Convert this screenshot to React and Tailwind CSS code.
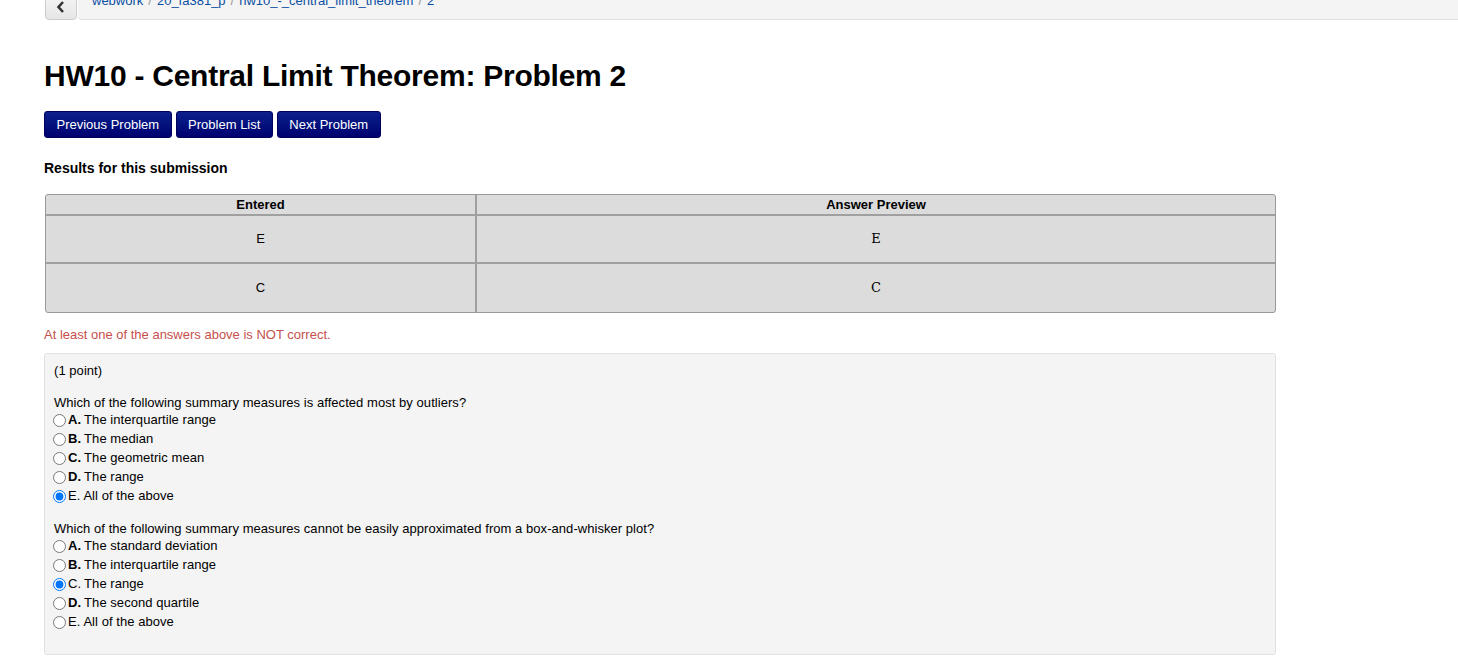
import React from 'react';

const questions = [
  {
    text: 'Which of the following summary measures is affected most by outliers?',
    options: [
      { letter: 'A.', label: 'The interquartile range' },
      { letter: 'B.', label: 'The median' },
      { letter: 'C.', label: 'The geometric mean' },
      { letter: 'D.', label: 'The range' },
      { letter: 'E.', label: 'All of the above', checked: true, plain: true },
    ],
  },
  {
    text: 'Which of the following summary measures cannot be easily approximated from a box-and-whisker plot?',
    options: [
      { letter: 'A.', label: 'The standard deviation' },
      { letter: 'B.', label: 'The interquartile range' },
      { letter: 'C.', label: 'The range', checked: true, plain: true },
      { letter: 'D.', label: 'The second quartile' },
      { letter: 'E.', label: 'All of the above', plain: true },
    ],
  },
];

const answers = ['E', 'C'];

export default function App() {
  return (
    <div className="min-h-screen bg-white text-black font-['Liberation_Sans',Arial,sans-serif]">
      {/* Breadcrumb (scrolled partly off the top) */}
      <div className="flex -mt-[22px] pl-[45px]">
        <button className="w-[32px] h-[42px] border border-[#ccc] rounded-b-[4px] bg-gradient-to-b from-white to-[#e6e6e6] flex items-end justify-center pb-[6px] text-[#333]">
          <svg width="10" height="12" viewBox="0 0 10 12">
            <path d="M7 1 L2.5 6 L7 11" stroke="#333" strokeWidth="2.6" fill="none" />
          </svg>
        </button>
        <div className="flex-1 h-[42px] ml-[1px] bg-[#f4f4f4] border-b border-[#e0e0e0] rounded-bl-[4px] flex items-end pl-[14px] pb-[12px] text-[13px] leading-none text-[#0b4fa3]">
          webwork <span className="mx-[5px] text-[#999]">/</span> 20_fa381_p <span className="mx-[5px] text-[#999]">/</span> hw10_-_central_limit_theorem <span className="mx-[5px] text-[#999]">/</span> 2
        </div>
      </div>

      <div className="pl-[44px] w-[1276px]">
        <h1 className="mt-[38px] text-[30px] font-bold leading-[36px] tracking-[-0.25px]">
          HW10 - Central Limit Theorem: Problem 2
        </h1>

        <div className="mt-[17px] flex gap-[4px]">
          {['Previous Problem', 'Problem List', 'Next Problem'].map((b) => (
            <button
              key={b}
              className="h-[27px] px-[11.5px] rounded-[3px] border border-[#00005a] bg-gradient-to-b from-[#0d1f8c] to-[#000070] text-white text-[13px] leading-none"
            >
              {b}
            </button>
          ))}
        </div>

        <h2 className="mt-[22px] text-[14px] font-bold leading-[16px]">Results for this submission</h2>

        {/* Results table */}
        <div className="mt-[18px] ml-[1px] border border-[#999] rounded-[3px] bg-[#dcdcdc] overflow-hidden text-[13px]">
          <div className="grid grid-cols-[431px_1fr] h-[21px] border-b-2 border-[#a0a0a0]">
            <div className="border-r-2 border-[#a0a0a0] flex items-center justify-center font-bold">Entered</div>
            <div className="flex items-center justify-center font-bold">Answer Preview</div>
          </div>
          {answers.map((a, i) => (
            <div
              key={i}
              className={`grid grid-cols-[431px_1fr] h-[48px] ${i === 0 ? 'border-b-2 border-[#a0a0a0]' : ''}`}
            >
              <div className="border-r-2 border-[#a0a0a0] flex items-center justify-center">{a}</div>
              <div className="flex items-center justify-center font-['DejaVu_Serif',serif] text-[13px]">
                {a}
              </div>
            </div>
          ))}
        </div>

        <p className="mt-[14px] text-[13px] leading-[16px] text-[#c5504c]">At least one of the answers above is NOT correct.</p>

        {/* Problem body */}
        <div className="mt-[10px] h-[302px] border border-[#e2e2e2] rounded-[3px] bg-[#f4f4f4] px-[9px] pt-[7px] text-[13px] leading-[19px] tracking-[0.05px]">
          <p>(1 point)</p>
          {questions.map((q, qi) => (
            <div key={qi} className={qi === 0 ? 'mt-[15px]' : 'mt-[16px]'}>
              <p className="leading-[15px]">{q.text}</p>
              {q.options.map((o, oi) => (
                <label key={oi} className="flex items-center h-[19px]">
                  <input
                    type="radio"
                    name={`q${qi}`}
                    defaultChecked={!!o.checked}
                    className="m-0 -ml-[1px] mr-[2px] w-[13px] h-[13px] accent-[#0075ff] translate-y-[1px]"
                  />
                  <span className={o.plain ? '' : 'font-bold'}>{o.letter}</span>
                  <span className="ml-[3px]">{o.label}</span>
                </label>
              ))}
            </div>
          ))}
        </div>
      </div>
    </div>
  );
}
